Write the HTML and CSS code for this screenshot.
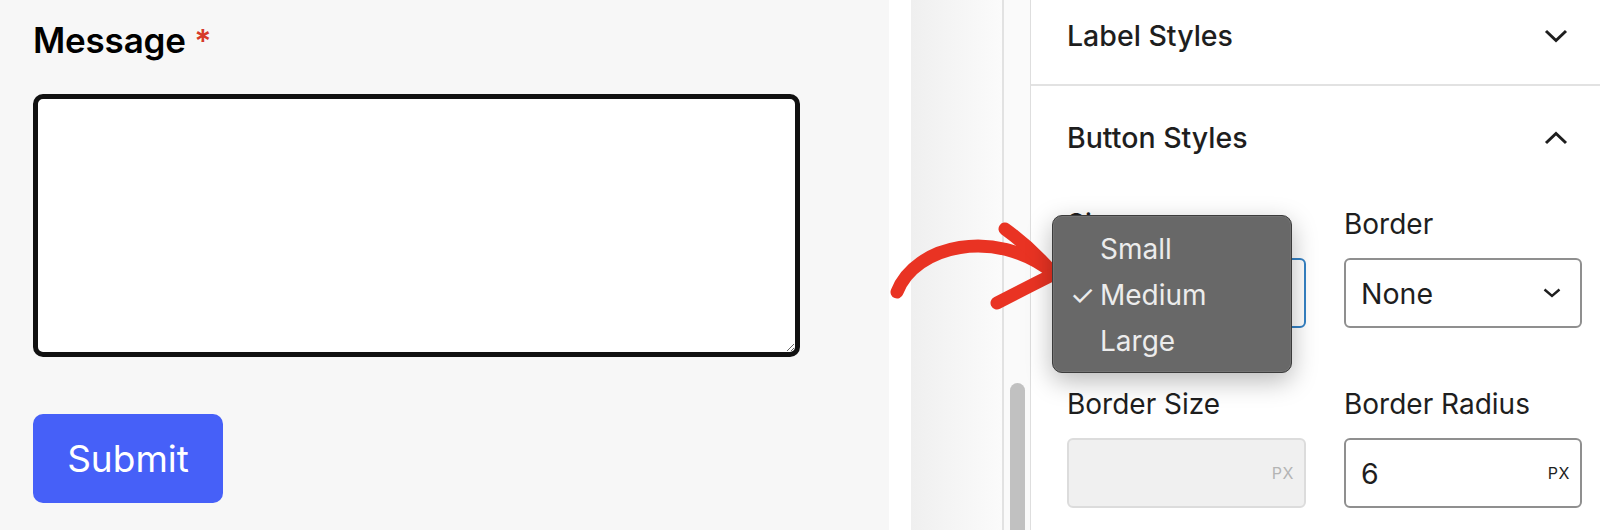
FILE: index.html
```html
<!DOCTYPE html>
<html lang="en">
<head>
<meta charset="utf-8">
<title>Button Styles</title>
<link rel="stylesheet" href="styles.css">
</head>
<body>
<div class="page">
  <main class="canvas">
    <label class="field-label" for="msg">Message <span class="req">*</span></label>
    <textarea id="msg" class="message"></textarea>
    <button class="submit" type="button">Submit</button>
  </main>
  <div class="gutter"></div>
  <div class="shade"></div>
  <div class="sbar"><div class="thumb"></div></div>
  <aside class="panel">
    <div class="section section-closed">
      <div class="sec-head">
        <span class="sec-title">Label Styles</span>
        <svg class="chev" width="24" height="14" viewBox="0 0 24 14"><path d="M2 2 L12 11.5 L22 2" fill="none" stroke="#1e1e1e" stroke-width="3"/></svg>
      </div>
    </div>
    <div class="section">
      <div class="sec-head sec-head-open">
        <span class="sec-title">Button Styles</span>
        <svg class="chev" width="24" height="14" viewBox="0 0 24 14"><path d="M2 12 L12 2.5 L22 12" fill="none" stroke="#1e1e1e" stroke-width="3"/></svg>
      </div>
      <div class="grid">
        <div class="field field-size">
          <div class="lbl">Size</div>
          <div class="ctl ctl-focus"></div>
          <ul class="menu">
            <li class="item">Small</li>
            <li class="item checked"><span class="check">✓</span>Medium</li>
            <li class="item">Large</li>
          </ul>
        </div>
        <div class="field">
          <div class="lbl">Border</div>
          <div class="ctl ctl-select">
            <span>None</span>
            <svg width="18" height="10" viewBox="0 0 18 10"><path d="M1.5 1.5 L9 8 L16.5 1.5" fill="none" stroke="#1e1e1e" stroke-width="2.4"/></svg>
          </div>
        </div>
        <div class="field">
          <div class="lbl">Border Size</div>
          <div class="ctl ctl-disabled"><span></span><span class="unit">PX</span></div>
        </div>
        <div class="field">
          <div class="lbl">Border Radius</div>
          <div class="ctl ctl-input"><span>6</span><span class="unit">PX</span></div>
        </div>
      </div>
    </div>
  </aside>
  <svg class="arrow" width="190" height="110" viewBox="0 0 190 110">
    <path d="M17 77 C35 30 115 12 172 57" fill="none" stroke="#e93323" stroke-width="13" stroke-linecap="round"/>
    <path d="M125 14 Q150 32 172 57" fill="none" stroke="#e93323" stroke-width="13" stroke-linecap="round"/>
    <path d="M117 88 Q148 72 172 60" fill="none" stroke="#e93323" stroke-width="13" stroke-linecap="round"/>
  </svg>
</div>
</body>
</html>
```
FILE: styles.css
```css
* { box-sizing: border-box; }
html, body { margin: 0; padding: 0; }
body {
  width: 1600px;
  height: 530px;
  overflow: hidden;
  background: #fff;
  font-family: Inter, "Liberation Sans", sans-serif;
  color: #1e1e1e;
}
.page {
  position: relative;
  display: flex;
  height: 530px;
  overflow: hidden;
}
.canvas {
  width: 889px;
  flex: none;
  background: #f7f7f7;
  padding: 20px 0 0 33px;
  display: flex;
  flex-direction: column;
  align-items: flex-start;
}
.field-label {
  font-size: 35px;
  line-height: 40px;
  font-weight: 600;
  color: #000;
  letter-spacing: -0.2px;
}
.req { color: #d63a2a; font-size: 32px; }
.message {
  margin-top: 32px;
  width: 767px;
  height: 263px;
  border: 5px solid #111;
  border-radius: 10px;
  background: #fff;
  resize: vertical;
  outline: none;
}
.submit {
  margin-top: 57px;
  width: 190px;
  height: 89px;
  border: 0;
  border-radius: 10px;
  background: #4660f8;
  color: #fff;
  font-family: Inter, "Liberation Sans", sans-serif;
  font-size: 37px;
  font-weight: 400;
}
.gutter { width: 22px; flex: none; background: #fff; }
.shade {
  width: 91px;
  flex: none;
  background: linear-gradient(to right, #efefef, #fbfbfb);
}
.sbar {
  width: 29px;
  flex: none;
  background: #fafafa;
  border-left: 2px solid #e2e2e2;
  border-right: 1px solid #dedede;
  padding-top: 383px;
  padding-left: 6px;
}
.thumb {
  width: 15px;
  height: 147px;
  background: #c1c1c1;
  border-radius: 8px 8px 0 0;
}
.panel {
  flex: 1;
  background: #fff;
}
.section-closed { border-bottom: 2px solid #e2e2e2; }
.sec-head {
  display: flex;
  justify-content: space-between;
  align-items: center;
  height: 84px;
  padding: 0 32px 13px 36px;
}
.sec-head-open {
  height: auto;
  padding: 28px 32px 0 36px;
  line-height: 48px;
}
.sec-title {
  font-size: 28.5px;
  font-weight: 500;
  color: #1e1e1e;
}
.grid {
  display: grid;
  grid-template-columns: 239px 238px;
  column-gap: 38px;
  row-gap: 60px;
  padding: 46px 0 0 36px;
}
.field { position: relative; }
.lbl {
  font-size: 28px;
  line-height: 32px;
  color: #1e1e1e;
  margin-bottom: 18px;
}
.ctl {
  height: 70px;
  border: 2px solid #8f8f8f;
  border-radius: 6px;
  display: flex;
  align-items: center;
  justify-content: space-between;
  padding: 0 10px 0 15px;
  font-size: 28.5px;
  color: #1e1e1e;
  background: #fff;
}
.ctl-focus { border-color: #3582c4; }
.ctl-select { padding-right: 19px; }
.ctl-disabled { background: #f0f0f0; border-color: #dcdcdc; }
.ctl-disabled .unit { color: #b4b4b4; }
.unit { font-size: 16px; letter-spacing: 0.5px; color: #1e1e1e; }
.menu {
  position: absolute;
  left: -15px;
  top: 7px;
  width: 240px;
  height: 158px;
  margin: 0;
  padding: 10px 0 0 0;
  list-style: none;
  background: #686868;
  border: 1px solid #3c3c3c;
  border-radius: 10px;
  box-shadow: 0 0 0 1px rgba(255,255,255,0.08) inset, 0 8px 26px rgba(0,0,0,0.28);
  z-index: 3;
}
.item {
  position: relative;
  font-size: 28px;
  line-height: 46px;
  padding-left: 47px;
  color: #ececec;
}
.check {
  position: absolute;
  left: 17px;
  font-size: 28px;
  font-weight: 400;
}
.arrow {
  position: absolute;
  left: 880px;
  top: 215px;
  z-index: 2;
}
```
